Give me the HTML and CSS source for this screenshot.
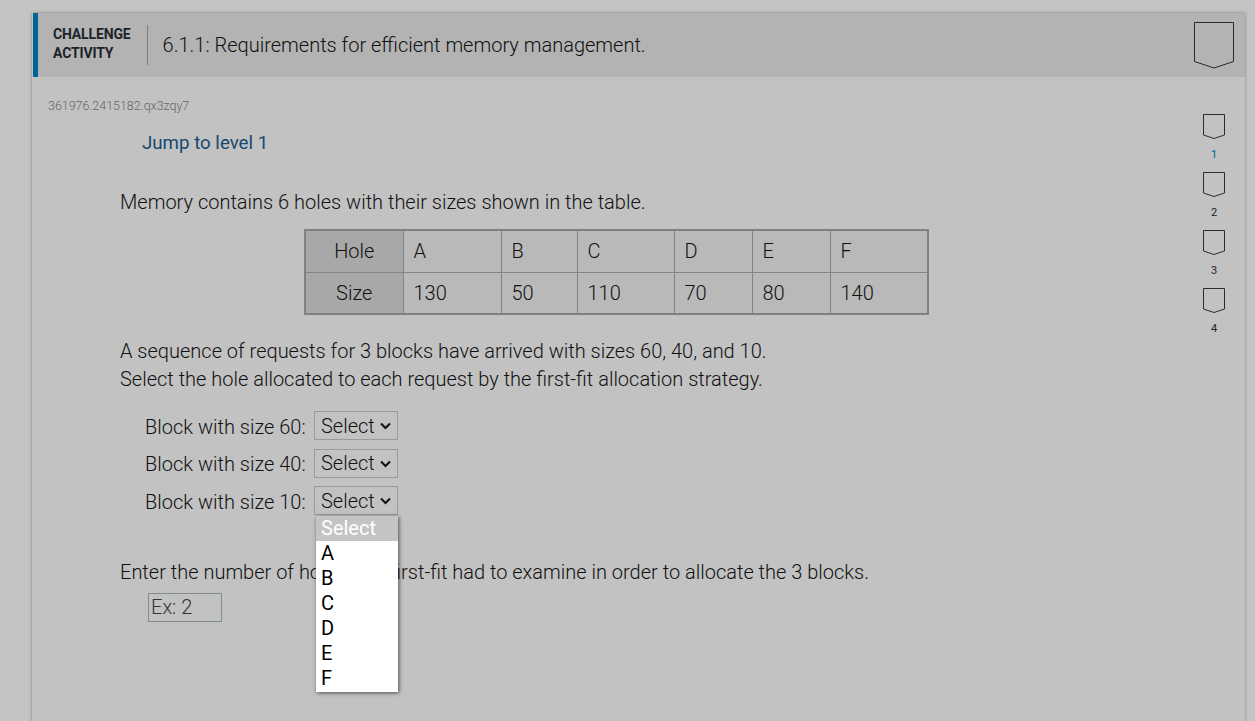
FILE: index.html
```html
<!DOCTYPE html>
<html lang="en">
<head>
    <meta charset="UTF-8">
    <title>Challenge activity</title>
    <link rel="stylesheet" href="styles.css">
</head>
<body>
    <div class="card">
        <div class="card-header">
            <div class="activity-label">CHALLENGE<br>ACTIVITY</div>
            <div class="activity-title">6.1.1: Requirements for efficient memory management.</div>
            <svg class="chevron-big" width="42" height="48" viewBox="0 0 42 48">
                <path d="M1.5 1.5H40.5V40.5L21 47L1.5 40.5Z" fill="none" stroke="#2b2b2b" stroke-width="1"/>
            </svg>
        </div>

        <div class="card-body">
            <div class="main">
                <div class="activity-id">361976.2415182.qx3zqy7</div>
                <div class="jump">Jump to level 1</div>

                <p class="intro">Memory contains 6 holes with their sizes shown in the table.</p>

                <table class="holes">
                    <tr>
                        <th>Hole</th>
                        <td class="w1">A</td>
                        <td class="w2">B</td>
                        <td class="w3">C</td>
                        <td class="w4">D</td>
                        <td class="w5">E</td>
                        <td class="w6">F</td>
                    </tr>
                    <tr>
                        <th>Size</th>
                        <td>130</td>
                        <td>50</td>
                        <td>110</td>
                        <td>70</td>
                        <td>80</td>
                        <td>140</td>
                    </tr>
                </table>

                <p class="sequence">A sequence of requests for 3 blocks have arrived with sizes 60, 40, and 10.<br>Select the hole allocated to each request by the first-fit allocation strategy.</p>

                <div class="blocks">
                    <div class="block-row">
                        <label>Block with size 60:</label>
                        <select><option>Select</option></select>
                    </div>
                    <div class="block-row">
                        <label>Block with size 40:</label>
                        <select><option>Select</option></select>
                    </div>
                    <div class="block-row">
                        <label>Block with size 10:</label>
                        <div class="select-wrap">
                            <select><option>Select</option></select>
                            <ul class="dropdown">
                                <li class="selected">Select</li>
                                <li>A</li>
                                <li>B</li>
                                <li>C</li>
                                <li>D</li>
                                <li>E</li>
                                <li>F</li>
                            </ul>
                        </div>
                    </div>
                </div>

                <p class="enter">Enter the number of holes that first-fit had to examine in order to allocate the 3 blocks.</p>
                <input class="answer" type="text" placeholder="Ex: 2">
            </div>

            <div class="levels">
                <div class="level">
                    <svg width="24" height="26" viewBox="0 0 24 26"><path d="M1.5 1.5H22.5V22L12 25.5L1.5 22Z" fill="none" stroke="#2b2b2b" stroke-width="1"/></svg>
                    <span class="current">1</span>
                </div>
                <div class="level">
                    <svg width="24" height="26" viewBox="0 0 24 26"><path d="M1.5 1.5H22.5V22L12 25.5L1.5 22Z" fill="none" stroke="#2b2b2b" stroke-width="1"/></svg>
                    <span>2</span>
                </div>
                <div class="level">
                    <svg width="24" height="26" viewBox="0 0 24 26"><path d="M1.5 1.5H22.5V22L12 25.5L1.5 22Z" fill="none" stroke="#2b2b2b" stroke-width="1"/></svg>
                    <span>3</span>
                </div>
                <div class="level">
                    <svg width="24" height="26" viewBox="0 0 24 26"><path d="M1.5 1.5H22.5V22L12 25.5L1.5 22Z" fill="none" stroke="#2b2b2b" stroke-width="1"/></svg>
                    <span>4</span>
                </div>
            </div>
        </div>
    </div>
</body>
</html>
```

FILE: styles.css
```css
html, body {
    height: 100%;
}

body {
    margin: 0;
    padding: 13px 10px 0 32px;
    box-sizing: border-box;
    overflow: hidden;
    background: #c4c4c4;
    font-family: Roboto, "Liberation Sans", sans-serif;
    font-weight: 300;
    font-size: 20px;
    color: #111;
}

.card {
    height: 720px;
    background: #c2c2c2;
    box-shadow: 0 0 3px rgba(0, 0, 0, 0.35);
}

.card-header {
    display: flex;
    align-items: center;
    height: 64px;
    box-sizing: border-box;
    padding: 0 10px 0 15px;
    background: #b3b3b3;
    border-left: 5px solid #00639a;
    margin-left: 1px;
}

.activity-label {
    font-weight: 700;
    font-size: 14px;
    letter-spacing: -0.15px;
    line-height: 19px;
    color: #1c2228;
    padding: 0 16px 2px 0;
    box-sizing: border-box;
    border-right: 1px solid #7c7c7c;
    height: 40px;
    display: flex;
    align-items: center;
}

.activity-title {
    flex: 1;
    margin-left: 15px;
}

.card-body {
    display: flex;
    height: 640px;
}

.main {
    flex: 1;
    position: relative;
}

.activity-id {
    font-size: 12.45px;
    color: #666;
    margin: 21px 0 0 16px;
    line-height: 16px;
}

.jump {
    font-size: 18.7px;
    font-weight: 400;
    color: #17486e;
    margin: 17px 0 0 110px;
    line-height: 24px;
}

.intro {
    margin: 33px 0 0 88px;
    line-height: 28px;
}

.holes {
    margin: 13px 0 0 272px;
    border-collapse: collapse;
    border: 2px solid #808080;
    background: #b9b9b9;
}

.holes th,
.holes td {
    height: 42px;
    padding: 0 0 0 10px;
    box-sizing: border-box;
    border: 1px solid #848484;
    font-weight: 300;
    text-align: left;
}

.holes th {
    width: 98px;
    padding: 0;
    text-align: center;
    background: #a8a8a8;
}

.w1 { width: 98px; }
.w2 { width: 76px; }
.w3 { width: 97px; }
.w4 { width: 78px; }
.w5 { width: 78px; }
.w6 { width: 98px; }

.sequence {
    margin: 22px 0 0 88px;
    line-height: 28px;
}

.blocks {
    margin: 14px 0 0 113px;
}

.block-row {
    display: flex;
    align-items: center;
    height: 37.5px;
    gap: 9px;
}

.block-row label {
    width: 160px;
    white-space: nowrap;
    padding-top: 2px;
}

.select-wrap {
    position: relative;
}

/* the native arrow is too thin, so it is drawn as a background */
select {
    appearance: none;
    width: 84px;
    height: 29px;
    padding: 0 0 0 6px;
    background: transparent url("data:image/svg+xml,%3Csvg xmlns='http://www.w3.org/2000/svg' width='11' height='8'%3E%3Cpath d='M1 1.5L5.5 6L10 1.5' fill='none' stroke='%23111' stroke-width='2'/%3E%3C/svg%3E") no-repeat 65px 10px;
    border: 1px solid #9a9a9a;
    border-radius: 0;
    font-family: Roboto, sans-serif;
    font-weight: 300;
    font-size: 20px;
    color: #111;
    display: block;
}

.dropdown {
    position: absolute;
    top: 30px;
    left: 2px;
    width: 82px;
    margin: 0;
    padding: 0 0 1px;
    list-style: none;
    background: #fff;
    font-weight: 400;
    font-size: 20px;
    line-height: 25px;
    color: #000;
    box-shadow: 1px 1px 4px rgba(0, 0, 0, 0.6);
}

.dropdown li {
    padding-left: 5px;
}

.dropdown .selected {
    background: #c4c4c4;
    color: #fff;
}

.enter {
    margin: 38px 0 0 88px;
    line-height: 28px;
}

.answer {
    display: block;
    width: 74px;
    height: 29px;
    box-sizing: border-box;
    margin: 7px 0 0 116px;
    padding: 0 2px;
    background: transparent;
    border: 1px solid #7f8c92;
    font-family: Roboto, sans-serif;
    font-weight: 300;
    font-size: 20px;
}

.answer::placeholder {
    color: #333;
    opacity: 1;
}

.levels {
    width: 62px;
    padding-top: 36px;
}

.level {
    display: flex;
    flex-direction: column;
    align-items: center;
    height: 58px;
    font-size: 11px;
    font-weight: 400;
    color: #1c2228;
}

.level svg {
    display: block;
}

.level span {
    line-height: 13px;
    margin-top: 9px;
}

.level .current {
    color: #00639a;
}
```
